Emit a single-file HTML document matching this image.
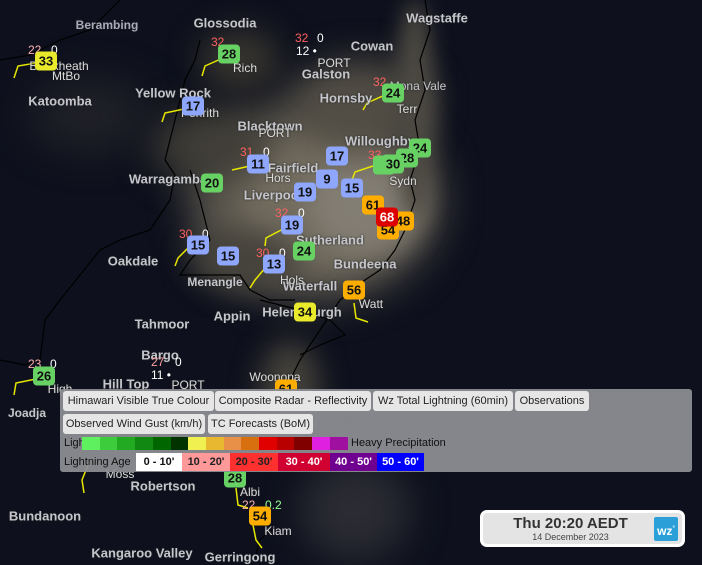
<!DOCTYPE html>
<html><head><meta charset="utf-8"><style>
*{margin:0;padding:0;box-sizing:border-box}
body{width:702px;height:558px;overflow:hidden;background:#0e111d;font-family:"Liberation Sans",sans-serif;position:relative}
.land{position:absolute;left:0;top:0;width:702px;height:558px}
.c{position:absolute;border-radius:50%;filter:blur(14px)}
.b{position:absolute;height:19px;min-width:22px;padding:0 3px;border-radius:4px;font:bold 13px/19px "Liberation Sans",sans-serif;color:#111;text-align:center;transform:translate(-50%,-50%)}
.g{background:#67d164}.bl{background:#8ea6fb}.y{background:#eaea2c}.o{background:#ffae00}.r{background:#dd0000;color:#fff}
.p{position:absolute;font:bold 13px "Liberation Sans",sans-serif;color:#c4c6cc;text-shadow:0 0 2px #222;white-space:nowrap;transform:translate(-50%,-50%)}
.s{font-weight:normal;font-size:12px;color:#ddd}
.t{position:absolute;font:12px "Liberation Sans",sans-serif;color:#ff6060;white-space:nowrap}
.w{position:absolute;font:12px "Liberation Sans",sans-serif;color:#fff;white-space:nowrap}
#panel{position:absolute;left:60px;top:389px;width:632px;height:83px;background:rgba(140,141,147,0.94);border-radius:3px}
.btn{position:absolute;height:20px;background:#e6e6e6;border-radius:3px;font:11px/20px "Liberation Sans",sans-serif;color:#222;text-align:center;white-space:nowrap;overflow:hidden}
.lab{position:absolute;font:11px "Liberation Sans",sans-serif;color:#111}
.cell{position:absolute;top:48px;width:18px;height:13px}
.la{position:absolute;top:64px;height:18px;font:bold 11px/18px "Liberation Sans",sans-serif;text-align:center}
</style></head><body>
<div class="land">
<div class="c" style="left:190px;top:100px;width:250px;height:200px;background:#5e5a50;filter:blur(20px)"></div>
<div class="c" style="left:240px;top:130px;width:180px;height:140px;background:#736d60"></div>
<div class="c" style="left:310px;top:160px;width:110px;height:90px;background:#837e74"></div>
<div class="c" style="left:150px;top:110px;width:120px;height:70px;background:#403e37;filter:blur(18px)"></div>
<div class="c" style="left:290px;top:60px;width:140px;height:90px;background:#524e45;filter:blur(18px)"></div>
<div class="c" style="left:200px;top:30px;width:80px;height:60px;background:#37352f;filter:blur(16px)"></div>
<div class="c" style="left:190px;top:230px;width:110px;height:60px;background:#46433c"></div>
<div class="c" style="left:30px;top:80px;width:120px;height:70px;background:#202128;filter:blur(20px)"></div>
<div class="c" style="left:395px;top:0px;width:40px;height:220px;background:#4c4942;filter:blur(10px)"></div>
<div class="c" style="left:260px;top:340px;width:60px;height:100px;background:#45423b"></div>
<div class="c" style="left:300px;top:460px;width:110px;height:100px;background:#2a2b33;filter:blur(18px)"></div>
</div>
<svg style="position:absolute;left:0;top:0" width="702" height="558">
<g fill="none" stroke="#000" stroke-width="1.2">
<polyline points="0,60 30,55 60,40 90,30 110,10 120,0"/>
<polyline points="200,40 195,60 185,80 180,100 175,120 170,140 165,160 175,175 170,200 160,215 150,230 120,240 100,250 80,275 60,300 45,320 40,360 25,365 0,360"/>
<polyline points="190,170 200,200 210,240 190,260 180,275 215,275 240,275 250,290 270,300 295,300"/>
<polyline points="260,300 300,310 330,320 345,335 320,345 300,355"/>
<polyline points="425,0 430,30 420,60 425,90 415,120 420,150 410,180 415,200 405,230 395,250 380,270 365,280 340,300 320,330 300,360 290,380"/>
<polyline points="270,530 260,540 255,558"/>
</g>
<g stroke="#e6e600" stroke-width="1.5" fill="none">
<polyline points="36,63 18,66 14,78"/><polyline points="223,58 205,66 202,76"/><polyline points="184,109 165,113 162,122"/>
<polyline points="385,95 367,103 363,110"/><polyline points="250,166 232,170"/><polyline points="376,165 355,172 352,180"/>
<polyline points="285,228 266,238 265,246"/><polyline points="188,248 178,258 175,266"/><polyline points="266,267 255,280 250,288"/>
<polyline points="354,303 356,318 368,322"/><polyline points="36,379 16,383 14,395"/><polyline points="90,460 82,480 84,493"/>
<polyline points="253,525 256,540 262,548"/><polyline points="236,488 238,505 248,508"/>
</g>
</svg>
<div class="p" style="left:107px;top:25px;font-size:12px;color:#aab">Berambing</div>
<div class="p" style="left:225px;top:23px">Glossodia</div>
<div class="p" style="left:437px;top:18px">Wagstaffe</div>
<div class="p" style="left:372px;top:46px">Cowan</div>
<div class="p s" style="left:334px;top:63px">PORT</div>
<div class="p" style="left:326px;top:74px">Galston</div>
<div class="p" style="left:60px;top:101px">Katoomba</div>
<div class="p" style="left:173px;top:93px">Yellow Rock</div>
<div class="p" style="left:346px;top:98px">Hornsby</div>
<div class="p" style="left:418px;top:86px;font-weight:normal;font-size:12px">Mona Vale</div>
<div class="p" style="left:270px;top:126px">Blacktown</div>
<div class="p" style="left:380px;top:141px">Willoughby</div>
<div class="p" style="left:293px;top:168px">Fairfield</div>
<div class="p" style="left:168px;top:179px">Warragamba</div>
<div class="p" style="left:273px;top:195px">Liverpool</div>
<div class="p" style="left:330px;top:240px">Sutherland</div>
<div class="p" style="left:133px;top:261px">Oakdale</div>
<div class="p" style="left:365px;top:264px">Bundeena</div>
<div class="p" style="left:215px;top:282px;font-size:12px">Menangle</div>
<div class="p" style="left:310px;top:286px">Waterfall</div>
<div class="p" style="left:302px;top:312px">Helensburgh</div>
<div class="p" style="left:232px;top:316px">Appin</div>
<div class="p" style="left:162px;top:324px">Tahmoor</div>
<div class="p" style="left:160px;top:355px">Bargo</div>
<div class="p" style="left:126px;top:384px">Hill Top</div>
<div class="p" style="left:27px;top:413px;font-size:12px">Joadja</div>
<div class="p" style="left:163px;top:486px">Robertson</div>
<div class="p" style="left:45px;top:516px">Bundanoon</div>
<div class="p" style="left:142px;top:553px">Kangaroo Valley</div>
<div class="p" style="left:240px;top:557px">Gerringong</div>
<div class="p s" style="left:371px;top:304px">Watt</div>
<div class="p s" style="left:278px;top:531px">Kiam</div>
<div class="p s" style="left:250px;top:492px">Albi</div>
<div class="p s" style="left:245px;top:68px">Rich</div>
<div class="p s" style="left:66px;top:76px">MtBo</div>
<div class="p s" style="left:59px;top:66px">Blackheath</div>
<div class="p s" style="left:407px;top:109px">Terr</div>
<div class="p s" style="left:403px;top:181px">Sydn</div>
<div class="p s" style="left:278px;top:178px">Hors</div>
<div class="p s" style="left:292px;top:280px">Hols</div>
<div class="p s" style="left:60px;top:389px">High</div>
<div class="p s" style="left:120px;top:474px">Moss</div>
<div class="p s" style="left:200px;top:113px">Penrith</div>
<div class="p s" style="left:275px;top:133px">PORT</div>
<div class="p s" style="left:188px;top:385px">PORT</div>
<div class="p s" style="left:275px;top:377px">Woonona</div>
<div class="t" style="left:28px;top:43px;color:#ffb0b0">22</div><div class="w" style="left:51px;top:43px">0</div>
<div class="t" style="left:211px;top:35px">32</div>
<div class="t" style="left:295px;top:31px">32</div><div class="w" style="left:317px;top:31px">0</div><div class="w" style="left:296px;top:44px">12 •</div>
<div class="t" style="left:373px;top:75px">32</div>
<div class="t" style="left:240px;top:145px">31</div><div class="w" style="left:263px;top:145px">0</div>
<div class="t" style="left:368px;top:148px">33</div>
<div class="t" style="left:275px;top:206px">32</div><div class="w" style="left:298px;top:206px">0</div>
<div class="t" style="left:179px;top:227px">30</div><div class="w" style="left:202px;top:227px">0</div>
<div class="t" style="left:256px;top:246px">30</div><div class="w" style="left:279px;top:246px">0</div>
<div class="t" style="left:28px;top:357px;color:#ffb0b0">23</div><div class="w" style="left:50px;top:357px">0</div>
<div class="t" style="left:151px;top:355px;color:#ffa0a0">27</div><div class="w" style="left:175px;top:355px">0</div><div class="w" style="left:151px;top:368px">11 •</div>
<div class="t" style="left:242px;top:498px;color:#ffb0b0">22</div><div class="w" style="left:265px;top:498px;color:#9f9">0.2</div>
<div class="b y" style="left:46px;top:61px">33</div>
<div class="b g" style="left:229px;top:54px">28</div>
<div class="b bl" style="left:193px;top:106px">17</div>
<div class="b g" style="left:393px;top:93px">24</div>
<div class="b bl" style="left:258px;top:164px">11</div>
<div class="b bl" style="left:337px;top:156px">17</div>
<div class="b g" style="left:420px;top:148px">24</div>
<div class="b g" style="left:407px;top:158px">28</div>
<div class="b g" style="left:384px;top:165px">&nbsp;</div>
<div class="b g" style="left:393px;top:164px">30</div>
<div class="b bl" style="left:327px;top:179px">9</div>
<div class="b bl" style="left:352px;top:188px">15</div>
<div class="b g" style="left:212px;top:183px">20</div>
<div class="b bl" style="left:305px;top:192px">19</div>
<div class="b o" style="left:373px;top:205px">61</div>
<div class="b o" style="left:403px;top:221px">48</div>
<div class="b o" style="left:388px;top:230px">54</div>
<div class="b r" style="left:387px;top:217px">68</div>
<div class="b bl" style="left:292px;top:225px">19</div>
<div class="b bl" style="left:198px;top:245px">15</div>
<div class="b bl" style="left:228px;top:256px">15</div>
<div class="b g" style="left:304px;top:251px">24</div>
<div class="b bl" style="left:274px;top:264px">13</div>
<div class="b o" style="left:354px;top:290px">56</div>
<div class="b y" style="left:305px;top:312px">34</div>
<div class="b g" style="left:44px;top:376px">26</div>
<div class="b o" style="left:286px;top:389px">61</div>
<div class="b g" style="left:235px;top:478px">28</div>
<div class="b o" style="left:260px;top:516px">54</div>
<div id="panel">
<div class="btn" style="left:3px;top:2px;width:151px">Himawari Visible True Colour</div>
<div class="btn" style="left:155px;top:2px;width:156px">Composite Radar - Reflectivity</div>
<div class="btn" style="left:313px;top:2px;width:140px">Wz Total Lightning (60min)</div>
<div class="btn" style="left:455px;top:2px;width:74px">Observations</div>
<div class="btn" style="left:3px;top:25px;width:142px">Observed Wind Gust (km/h)</div>
<div class="btn" style="left:148px;top:25px;width:105px">TC Forecasts (BoM)</div>
<div class="lab" style="left:4px;top:48px">Light</div>
<div class="cell" style="left:22px;background:#5ef05e"></div><div class="cell" style="left:39.7px;background:#3ccc3c"></div><div class="cell" style="left:57.4px;background:#22aa22"></div><div class="cell" style="left:75.1px;background:#118811"></div><div class="cell" style="left:92.8px;background:#006600"></div><div class="cell" style="left:110.5px;background:#003300"></div><div class="cell" style="left:128.2px;background:#f0f050"></div><div class="cell" style="left:145.9px;background:#e8b830"></div><div class="cell" style="left:163.6px;background:#e89048"></div><div class="cell" style="left:181.3px;background:#d87010"></div><div class="cell" style="left:199px;background:#e00000"></div><div class="cell" style="left:216.7px;background:#b80000"></div><div class="cell" style="left:234.4px;background:#800000"></div><div class="cell" style="left:252.1px;background:#e020e0"></div><div class="cell" style="left:269.8px;background:#a010a0;width:18.2px"></div>
<div class="lab" style="left:291px;top:48px">Heavy Precipitation</div>
<div class="lab" style="left:4px;top:67px">Lightning Age</div>
<div class="la" style="left:76px;width:46px;background:#fff;color:#111">0 - 10'</div>
<div class="la" style="left:122px;width:48px;background:#ff9898;color:#222">10 - 20'</div>
<div class="la" style="left:170px;width:48px;background:#ff3030;color:#222">20 - 30'</div>
<div class="la" style="left:218px;width:52px;background:#d00030;color:#fff">30 - 40'</div>
<div class="la" style="left:270px;width:47px;background:#700090;color:#fff">40 - 50'</div>
<div class="la" style="left:317px;width:47px;background:#0000ff;color:#fff">50 - 60'</div>
</div>
<div style="position:absolute;left:480px;top:510px;width:205px;height:37px;background:#e4e4e4;border:3px solid #fff;border-radius:7px">
<div style="position:absolute;left:0;width:175px;top:2px;text-align:center;font:bold 15px 'Liberation Sans',sans-serif;color:#333">Thu 20:20 AEDT</div>
<div style="position:absolute;left:0;width:175px;top:19px;text-align:center;font:9px 'Liberation Sans',sans-serif;color:#444">14 December 2023</div>
<div style="position:absolute;left:171px;top:4px;width:24px;height:24px;background:#2ba0d8;border-radius:2px;color:#fff;font:bold 12px/24px 'Liberation Sans',sans-serif;text-align:center">wz<sup style="font-size:6px">°</sup></div>
</div>
</body></html>
